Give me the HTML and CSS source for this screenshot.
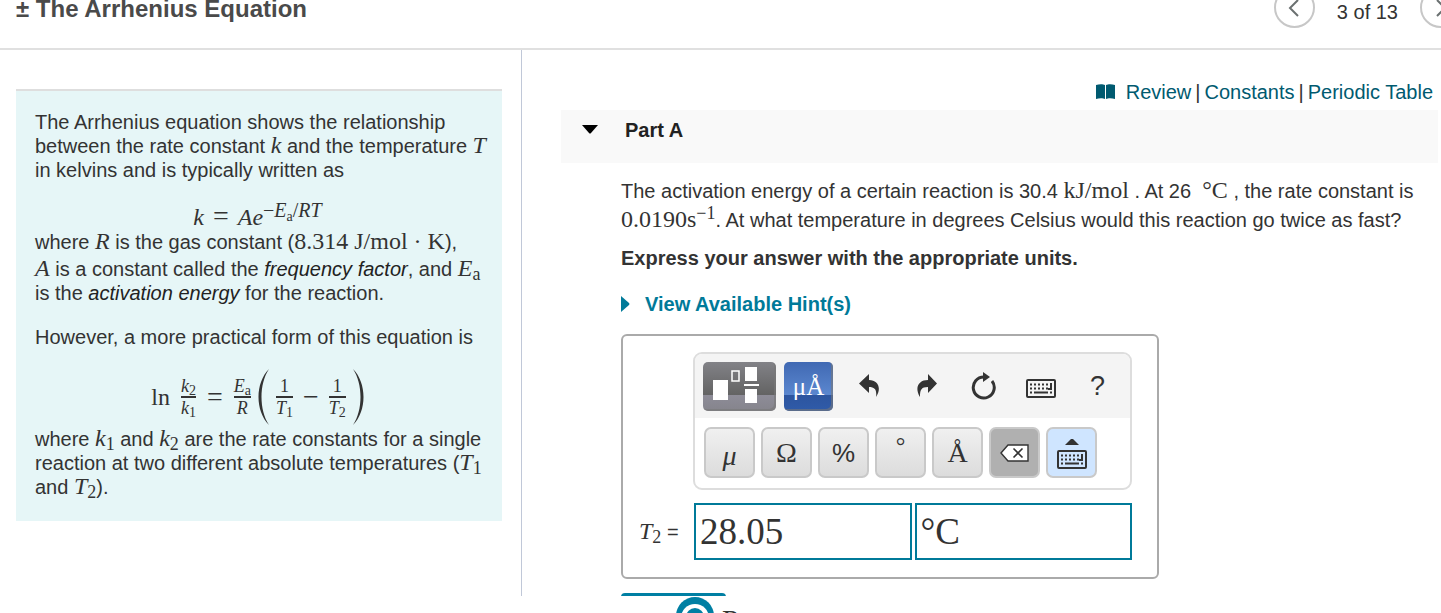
FILE: index.html
```html
<!DOCTYPE html>
<html lang="en">

<head>
    <meta charset="UTF-8">
    <meta name="viewport" content="width=device-width, initial-scale=1.0">
    <title>The Arrhenius Equation</title>
    <link rel="stylesheet" href="styles.css">
</head>

<body>
    <header class="page-header">
        <h1>± The Arrhenius Equation</h1>
        <nav class="pager">
            <button class="round-btn" aria-label="Previous item">
                <svg width="12" height="18" viewBox="0 0 12 18"><path d="M10 1 L2 9 L10 17" /></svg>
            </button>
            <span class="pager-text">3 of 13</span>
            <button class="round-btn" aria-label="Next item">
                <svg width="12" height="18" viewBox="0 0 12 18"><path d="M2 1 L10 9 L2 17" /></svg>
            </button>
        </nav>
    </header>

    <main class="content">
        <aside class="sidebar">
            <section class="intro">
                <p>The Arrhenius equation shows the relationship between the rate constant <i class="math">k</i> and the temperature <i class="math">T</i><br>
                    in kelvins and is typically written as</p>
                <div class="equation">
                    <span class="math"><i>k</i> <span class="rel">=</span> <i>Ae</i><sup>−<i>E</i><sub>a</sub>/<i>RT</i></sup></span>
                </div>
                <p>where <i class="math">R</i> is the gas constant (<span class="math units">8.314 J/mol · K</span>),<br>
                    <i class="math">A</i> is a constant called the <em>frequency factor</em>, and <span class="math"><i>E</i><sub>a</sub></span><br>
                    is the <em>activation energy</em> for the reaction.</p>
                <p class="spaced">However, a more practical form of this equation is</p>
                <div class="equation equation-tall math">
                    <span>ln</span>
                    <span class="frac"><span><i>k</i><sub>2</sub></span><span><i>k</i><sub>1</sub></span></span>
                    <span class="op">=</span>
                    <span class="frac"><span><i>E</i><sub>a</sub></span><span><i>R</i></span></span>
                    <span class="parens">
                        <svg width="12" height="56" viewBox="0 0 12 56"><path d="M11 0 C-3 14 -3 42 11 56 C1 41 1 15 11 0 Z" /></svg>
                        <span class="frac"><span>1</span><span><i>T</i><sub>1</sub></span></span>
                        <span class="op">−</span>
                        <span class="frac"><span>1</span><span><i>T</i><sub>2</sub></span></span>
                        <svg width="12" height="56" viewBox="0 0 12 56"><path d="M1 0 C15 14 15 42 1 56 C11 41 11 15 1 0 Z" /></svg>
                    </span>
                </div>
                <p>where <span class="math"><i>k</i><sub>1</sub></span> and <span class="math"><i>k</i><sub>2</sub></span> are the rate constants for a single reaction at two different absolute temperatures (<span class="math"><i>T</i><sub>1</sub></span><br>
                    and <span class="math"><i>T</i><sub>2</sub></span>).</p>
            </section>
        </aside>

        <section class="problem">
            <div class="resources">
                <svg class="book" width="19" height="16" viewBox="0 0 19 16">
                    <path d="M0 1 C3 0 7 0 9 1 V15 C7 14 3 14 0 15 Z M10 1 C12 0 16 0 19 1 V15 C16 14 12 14 10 15 Z" />
                </svg>
                <a href="#">Review</a> | <a href="#">Constants</a> | <a href="#">Periodic Table</a>
            </div>

            <div class="part-header">
                <button class="part-toggle">
                    <svg width="16" height="10" viewBox="0 0 16 10"><path d="M0 0 H16 L9 8 Q8 9 7 8 Z" /></svg>
                    Part A
                </button>
            </div>

            <div class="part-body">
                <p class="question">The activation energy of a certain reaction is 30.4 <span class="math">kJ/mol</span> . At 26 &nbsp;<span class="math">°C</span> , the rate constant is<br>
                    <span class="math">0.0190s<sup>−1</sup></span>. At what temperature in degrees Celsius would this reaction go twice as fast?</p>
                <p class="instruction">Express your answer with the appropriate units.</p>
                <button class="hints">
                    <svg width="9" height="16" viewBox="0 0 9 16"><path d="M0 0 L8 7 Q9 8 8 9 L0 16 Z" /></svg>
                    View Available Hint(s)
                </button>

                <form class="answer">
                    <div class="toolbar">
                        <div class="tools">
                            <button type="button" class="tool templates" aria-label="Templates">
                                <svg width="73" height="49" viewBox="0 0 73 49">
                                    <rect x="10" y="18" width="15" height="20" fill="#fff" />
                                    <rect x="29" y="9" width="7" height="10" fill="none" stroke="#fff" stroke-width="1.500" />
                                    <rect x="42" y="5" width="12" height="14" fill="#fff" />
                                    <rect x="41" y="22" width="15" height="2" fill="#fff" />
                                    <rect x="42" y="27" width="12" height="14" fill="#fff" />
                                </svg>
                            </button>
                            <button type="button" class="tool symbols">μÅ</button>
                            <button type="button" class="icon-btn" aria-label="Undo">
                                <svg width="22" height="24" viewBox="0 0 22 24"><path d="M0 9.500 L10 0 V6 C19 6 23 14 17 23 C18 16 16 13 10 13 V19 Z" /></svg>
                            </button>
                            <button type="button" class="icon-btn" aria-label="Redo">
                                <svg width="22" height="24" viewBox="0 0 22 24"><path d="M21 9.500 L12 0 V6 C3 6 -2 13 4 23 C4 16 5 13 12 13 V19 Z" /></svg>
                            </button>
                            <button type="button" class="icon-btn" aria-label="Reset">
                                <svg width="26" height="28" viewBox="0 0 26 28">
                                    <path d="M13 5 A10.500 10.500 0 1 0 21 9" fill="none" stroke="#333" stroke-width="3" />
                                    <path d="M12 0 L19 5 L12 10 Z" />
                                </svg>
                            </button>
                            <button type="button" class="icon-btn" aria-label="Keyboard shortcuts">
                                <svg class="keyboard" width="30" height="24" viewBox="0 0 30 24">
                                    <rect x="1" y="6" width="28" height="17" rx="1" />
                                    <path d="M4 10.500 H24 M4 14.500 H22 M4 18.500 H6 M24 18.500 H26" stroke-dasharray="2 2" />
                                    <path d="M8 18.500 H22 M25 9 V15 H22" />
                                </svg>
                            </button>
                            <button type="button" class="icon-btn help">?</button>
                        </div>
                        <div class="keys">
                            <button type="button" class="key mu"><i>μ</i></button>
                            <button type="button" class="key">Ω</button>
                            <button type="button" class="key percent">%</button>
                            <button type="button" class="key degree">°</button>
                            <button type="button" class="key">Å</button>
                            <button type="button" class="key delete" aria-label="Delete">
                                <svg width="29" height="18" viewBox="0 0 29 18">
                                    <path d="M1 9 L8 1 H28 V17 H8 Z" fill="#fff" stroke="#333" stroke-width="1.400" />
                                    <path d="M13.500 4.500 L22.500 13.500 M22.500 4.500 L13.500 13.500" stroke="#333" stroke-width="1.600" />
                                </svg>
                            </button>
                            <button type="button" class="key toggle" aria-label="Hide keyboard">
                                <svg class="keyboard" width="30" height="32" viewBox="0 0 30 32">
                                    <path class="arrow" d="M8 8 L14 2 H16 L22 8 Z" />
                                    <rect x="1" y="14" width="28" height="17" rx="1" />
                                    <path d="M4 18.500 H24 M4 22.500 H22 M4 26.500 H6 M24 26.500 H26" stroke-dasharray="2 2" />
                                    <path d="M8 26.500 H22 M25 17 V23 H22" />
                                </svg>
                            </button>
                        </div>
                    </div>
                    <div class="fields">
                        <label for="value"><span class="math"><i>T</i><sub>2</sub></span> =</label>
                        <input id="value" type="text" value="28.05">
                        <input id="units" type="text" value="°C" aria-label="Units">
                    </div>
                </form>

                <button class="submit">Submit</button>
            </div>
        </section>
    </main>

    <footer class="page-footer">
        <svg width="40" height="40" viewBox="0 0 40 40">
            <circle cx="20" cy="20" r="19" fill="#007fa3" />
            <circle cx="20" cy="22" r="14" fill="#fff" />
            <circle cx="20" cy="21" r="9" fill="#007fa3" />
        </svg>
        <span>Pearson</span>
    </footer>
</body>

</html>
```
FILE: styles.css
```css
* {
    box-sizing: border-box;
}

body {
    margin: 0;
    height: 100vh;
    display: flex;
    flex-direction: column;
    overflow: hidden;
    background-color: #fff;
    color: #333;
    font-family: "Liberation Sans", Arial, sans-serif;
    font-size: 20px;
    line-height: 24px;
}

h1,
p {
    margin: 0;
}

button {
    padding: 0;
    border: none;
    background: none;
    color: inherit;
    font: inherit;
    cursor: pointer;
}

a {
    color: #005a70;
    text-decoration: none;
}

a:hover {
    text-decoration: underline;
}

svg {
    display: block;
    flex-shrink: 0;
}

/* Math */
.math {
    font-family: "Liberation Serif", "Times New Roman", serif;
    font-size: 24px;
    line-height: 20px;
}

.math sub,
.math sup {
    font-size: 18px;
    line-height: 0;
}

.math sub {
    vertical-align: -4px;
}

.math sup {
    vertical-align: 8px;
}

.math sup sub {
    font-size: 14px;
}

.equation .math sup {
    font-size: 20px;
}

.rel {
    margin: 0 3px;
    font-size: 28px;
}

.units {
    display: inline-block;
    padding-bottom: 6px;
}

/* Header */
.page-header {
    height: 50px;
    min-height: 0;
    flex-shrink: 0;
    display: flex;
    justify-content: space-between;
    align-items: flex-end;
    padding: 0 0 20px 16px;
    border-bottom: 2px solid #e0e0e0;
}

.page-header h1 {
    margin-bottom: 5px;
    font-size: 24px;
    line-height: 28px;
    color: #4a4a4a;
}

.pager {
    display: flex;
    align-items: flex-end;
    gap: 22px;
    margin-right: -20px;
}

.pager-text {
    margin-bottom: 4px;
}

.round-btn {
    display: flex;
    justify-content: center;
    align-items: center;
    width: 41px;
    height: 41px;
    border: 2px solid #c7c7c7;
    border-radius: 50%;
}

.round-btn path {
    fill: none;
    stroke: #6a7070;
    stroke-width: 2;
}

/* Columns */
.content {
    flex: 1;
    min-height: 0;
    display: grid;
    grid-template-columns: 522px 1fr;
    overflow: hidden;
}

.sidebar {
    padding: 39px 19px 0 16px;
    border-right: 1px solid #c0c8d8;
}

.intro {
    padding: 19px 4px 22px 19px;
    border-top: 2px solid #dedede;
    background-color: #e6f6f7;
}

.intro em {
    color: #222;
}

.spaced {
    margin-top: 20px;
}

.equation {
    display: flex;
    justify-content: center;
    align-items: center;
    height: 48px;
    padding: 20px 18px 0 0;
}

.equation-tall {
    gap: 11px;
    height: 78px;
    padding-top: 18px;
}

.parens {
    display: flex;
    align-items: center;
    gap: 6px;
    margin-left: -4px;
}

.frac {
    display: inline-flex;
    flex-direction: column;
    font-size: 18px;
    text-align: center;
}

.frac > span + span {
    border-top: 2px solid #333;
}

.math .frac sub {
    font-size: 14px;
    vertical-align: -3px;
}

.op {
    font-size: 28px;
}

.parens .op {
    padding: 0 4px;
}

.equation path {
    fill: #333;
}

/* Problem */
.problem {
    padding: 30px 3px 0 39px;
}

.resources {
    display: flex;
    justify-content: flex-end;
    gap: 4px;
    padding-right: 5px;
    margin-bottom: 6px;
}

.book {
    margin: 4px 7px 0 0;
    fill: #005a70;
}

.part-header {
    height: 53px;
    padding: 8px 21px;
    background-color: #f9f9f9;
}

.part-toggle {
    display: flex;
    align-items: center;
    gap: 27px;
    font-weight: bold;
    color: #222;
}

.part-body {
    padding: 14px 20px 0 60px;
}

.question {
    line-height: 29px;
}

.instruction {
    margin-top: 11px;
    font-weight: bold;
}

.hints {
    display: flex;
    align-items: center;
    gap: 15px;
    margin-top: 22px;
    color: #007a99;
    font-weight: bold;
}

.hints svg {
    fill: #007a99;
}

/* Answer box */
.answer {
    width: 538px;
    max-width: 100%;
    margin-top: 18px;
    padding: 16px 25px 17px 16px;
    border: 2px solid #aaa;
    border-radius: 6px;
}

.toolbar {
    margin-left: 54px;
    border: 2px solid #ddd;
    border-radius: 9px;
    overflow: hidden;
}

.tools {
    display: flex;
    height: 64px;
    padding: 8px 0 8px 8px;
    background-color: #f4f4f4;
}

.tool {
    flex-shrink: 0;
    height: 49px;
    margin-right: 8px;
    border-radius: 5px;
    box-shadow: inset -2px -2px 0 rgba(120, 120, 120, 0.6);
}

.templates {
    width: 73px;
    background: linear-gradient(#828287, #636363 67%, #8e8c98 67%, #85848c);
}

.symbols {
    width: 49px;
    background: linear-gradient(#4069b3, #5b87cf 67%, #2d559f 67%, #2f5ba9);
    color: #fff;
    font-family: "Liberation Serif", serif;
    font-size: 25px;
}

.icon-btn {
    display: flex;
    flex-shrink: 0;
    justify-content: center;
    align-items: center;
    width: 57px;
    height: 48px;
}

.icon-btn svg {
    fill: #333;
}

.help {
    font-size: 27px;
}

.keyboard rect {
    fill: none;
    stroke: #333;
    stroke-width: 2;
}

.keyboard path {
    fill: none;
    stroke: #333;
    stroke-width: 2;
}

.keyboard .arrow {
    fill: #333;
    stroke: none;
}

.keys {
    display: flex;
    gap: 6px;
    padding: 9px 9px 10px;
}

.key {
    display: flex;
    justify-content: center;
    align-items: center;
    width: 51px;
    height: 51px;
    border: 2px solid #c9c9c9;
    border-radius: 7px;
    background: linear-gradient(#f0f0f0, #dcdcdc);
    font-family: "Liberation Serif", serif;
    font-size: 28px;
}

.mu {
    padding-top: 6px;
}

.percent {
    font-family: "Liberation Sans", sans-serif;
    font-size: 26px;
}

.degree {
    align-items: flex-start;
    padding-top: 5px;
    font-size: 24px;
}

.delete {
    background: #b0b0b0;
}

.toggle {
    background: #cfe5ff;
}

.fields {
    display: flex;
    align-items: center;
    gap: 3px;
    margin-top: 13px;
}

.fields label {
    flex: 0 0 52px;
    white-space: nowrap;
}

.fields input {
    flex: 1;
    min-width: 0;
    height: 57px;
    padding: 0 4px;
    border: 2px solid #007a99;
    color: #333;
    font-family: "Liberation Serif", serif;
    font-size: 37px;
    outline: none;
}

.submit {
    width: 105px;
    height: 44px;
    margin-top: 14px;
    border-radius: 4px;
    background-color: #007fa3;
    color: #fff;
}

/* Footer */
.page-footer {
    flex: 0 0 17px;
    display: flex;
    gap: 7px;
    padding-left: 675px;
    overflow: hidden;
    font-family: "Liberation Serif", serif;
    font-size: 30px;
    line-height: 48px;
}
```
